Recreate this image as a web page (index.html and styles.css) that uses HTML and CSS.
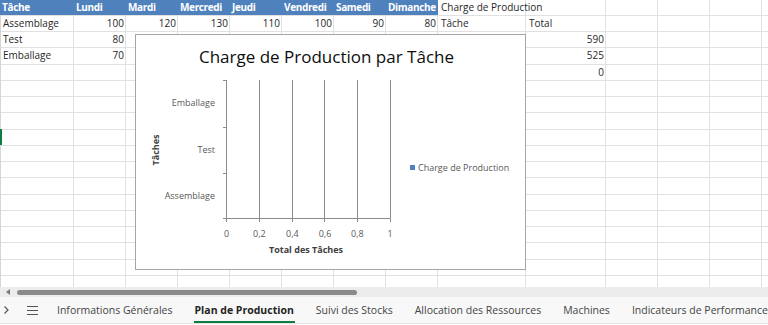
FILE: index.html
```html
<!DOCTYPE html>
<html lang="fr">

<head>
  <meta charset="UTF-8">
  <title>Plan de Production</title>
  <link rel="stylesheet" href="styles.css">
</head>

<body>
  <div class="app">
    <div class="sheet">
      <div class="row">
        <div class="cell head">Tâche</div>
        <div class="cell head">Lundi</div>
        <div class="cell head">Mardi</div>
        <div class="cell head">Mercredi</div>
        <div class="cell head">Jeudi</div>
        <div class="cell head">Vendredi</div>
        <div class="cell head">Samedi</div>
        <div class="cell head">Dimanche</div>
        <div class="cell">Charge de Production</div>
      </div>
      <div class="row">
        <div class="cell">Assemblage</div>
        <div class="cell num">100</div>
        <div class="cell num">120</div>
        <div class="cell num">130</div>
        <div class="cell num">110</div>
        <div class="cell num">100</div>
        <div class="cell num">90</div>
        <div class="cell num">80</div>
        <div class="cell">Tâche</div>
        <div class="cell">Total</div>
      </div>
      <div class="row">
        <div class="cell">Test</div>
        <div class="cell num">80</div>
        <div class="cell num col-j">590</div>
      </div>
      <div class="row tall">
        <div class="cell">Emballage</div>
        <div class="cell num">70</div>
        <div class="cell num col-j">525</div>
      </div>
      <div class="row">
        <div class="cell num col-j">0</div>
      </div>

      <!-- ligne active -->
      <i class="row-mark"></i>

      <!-- graphique posé sur la feuille -->
      <div class="chart">
        <svg width="389" height="234" viewBox="0 0 389 234">
          <text class="chart-title" x="190.5" y="27.5" text-anchor="middle">Charge de Production par Tâche</text>
          <path class="grid" d="M123.5 45V183 M156.5 45V183 M188.5 45V183 M221.5 45V183 M254.5 45V183" />
          <path class="axis" d="M90.5 45V183.5 M90.5 183.5H254.5 M87 45.5H90.5 M87 92.5H90.5 M87 138.5H90.5 M87 183.5H90.5 M90.5 183.5V187 M123.5 183.5V187 M156.5 183.5V187 M188.5 183.5V187 M221.5 183.5V187 M254.5 183.5V187" />
          <text class="label" x="79" y="71" text-anchor="end">Emballage</text>
          <text class="label" x="79" y="117.5" text-anchor="end">Test</text>
          <text class="label" x="79" y="164" text-anchor="end">Assemblage</text>
          <text class="label" x="90.7" y="201.5" text-anchor="middle">0</text>
          <text class="label" x="123.3" y="201.5" text-anchor="middle">0,2</text>
          <text class="label" x="156.3" y="201.5" text-anchor="middle">0,4</text>
          <text class="label" x="189" y="201.5" text-anchor="middle">0,6</text>
          <text class="label" x="221.3" y="201.5" text-anchor="middle">0,8</text>
          <text class="label" x="254" y="201.5" text-anchor="middle">1</text>
          <text class="axis-title" x="170" y="217.5" text-anchor="middle">Total des Tâches</text>
          <text class="axis-title" transform="translate(22.5 115) rotate(-90)" text-anchor="middle">Tâches</text>
          <rect class="swatch" x="274" y="130" width="5" height="5" />
          <text class="label" x="282" y="135.5">Charge de Production</text>
        </svg>
      </div>
    </div>

    <div class="hscroll">
      <i class="arrow"></i>
      <div class="thumb"></div>
    </div>

    <div class="tabs">
      <svg class="chev" width="7" height="10" viewBox="0 0 7 10">
        <path d="M1.5 1.5L5 5L1.5 8.5" />
      </svg>
      <svg class="menu" width="11" height="9" viewBox="0 0 11 9">
        <path d="M0 0.5H11 M0 4.5H11 M0 8.5H11" />
      </svg>
      <span class="tab">Informations Générales</span>
      <span class="tab active">Plan de Production</span>
      <span class="tab">Suivi des Stocks</span>
      <span class="tab">Allocation des Ressources</span>
      <span class="tab">Machines</span>
      <span class="tab">Indicateurs de Performance</span>
    </div>
  </div>
</body>

</html>
```

FILE: styles.css
```css
* {
  margin: 0;
  padding: 0;
  box-sizing: border-box;
}

body {
  width: 768px;
  height: 325px;
  overflow: hidden;
  background: #fff;
  font-family: "Open Sans", "Noto Sans", sans-serif;
}

.app {
  display: flex;
  flex-direction: column;
  height: 325px;
}

/* feuille de calcul */
.sheet {
  position: relative;
  height: 287px;
  flex-shrink: 0;
  overflow: hidden;
  background-image:
    linear-gradient(to right,
      #d6d6d6 0 1px, transparent 1px 73px,
      #e1e1e1 73px 74px, transparent 74px 125px,
      #e1e1e1 125px 126px, transparent 126px 177px,
      #e1e1e1 177px 178px, transparent 178px 229px,
      #e1e1e1 229px 230px, transparent 230px 281px,
      #e1e1e1 281px 282px, transparent 282px 333px,
      #e1e1e1 333px 334px, transparent 334px 385px,
      #e1e1e1 385px 386px, transparent 386px 437px,
      #e1e1e1 437px 438px, transparent 438px 525px,
      #e1e1e1 525px 526px, transparent 526px 605px,
      #e1e1e1 605px 606px, transparent 606px 657px,
      #e1e1e1 657px 658px, transparent 658px 709px,
      #e1e1e1 709px 710px, transparent 710px 761px,
      #e1e1e1 761px 762px, transparent 762px),
    repeating-linear-gradient(to bottom,
      transparent 0 15px, #e1e1e1 15px 16px,
      transparent 16px 31px, #e1e1e1 31px 32px,
      transparent 32px 47px, #e1e1e1 47px 48px,
      transparent 48px 64px, #e1e1e1 64px 65px);
}

.row {
  display: grid;
  grid-template-columns: 74px repeat(7, 52px) 88px 80px repeat(4, 52px) 1fr;
  height: 16px;
}

.row.tall {
  height: 17px;
}

.cell {
  height: 15px;
  padding: 0 2px 0 3px;
  font-size: 10px;
  line-height: 15px;
  color: #1f1f1f;
  white-space: nowrap;
}

.cell.head {
  padding-left: 2px;
  background: #4f81bd;
  color: #fff;
  font-weight: 700;
  letter-spacing: -0.35px;
  overflow: hidden;
}

.cell.num {
  text-align: right;
}

.col-j {
  grid-column: 10;
}

.row-mark {
  position: absolute;
  left: 0;
  top: 129px;
  width: 2px;
  height: 16px;
  background: #107c41;
}

/* graphique */
.chart {
  position: absolute;
  left: 135px;
  top: 34px;
  width: 391px;
  height: 236px;
  border: 1px solid #a6a6a6;
  background: #fff;
}

.chart svg {
  display: block;
}

.chart-title {
  font-size: 17px;
  font-weight: 500;
  fill: #0d0d0d;
}

.chart .grid {
  stroke: #8c8c8c;
  stroke-width: 1;
  fill: none;
}

.chart .axis {
  stroke: #8c8c8c;
  stroke-width: 1;
  fill: none;
}

.chart .label {
  font-size: 9px;
  fill: #595959;
}

.chart .axis-title {
  font-size: 9px;
  font-weight: 700;
  fill: #404040;
}

.chart .swatch {
  fill: #4f81bd;
}

/* barre de défilement */
.hscroll {
  display: flex;
  align-items: center;
  gap: 7px;
  height: 10px;
  flex-shrink: 0;
  padding-left: 6px;
  background: #ececec;
}

.hscroll .arrow {
  width: 0;
  height: 0;
  border-top: 3px solid transparent;
  border-bottom: 3px solid transparent;
  border-right: 4px solid #7a7a7a;
}

.hscroll .thumb {
  width: 340px;
  height: 5px;
  border-radius: 3px;
  background: #8a8a8a;
}

/* onglets */
.tabs {
  display: flex;
  align-items: center;
  height: 27px;
  flex-shrink: 0;
  padding-left: 3px;
  overflow: hidden;
  background: #f8f8f8;
  border-bottom: 1px solid #e3e3e3;
  font-size: 10.5px;
  color: #444;
  white-space: nowrap;
}

.tabs svg {
  flex-shrink: 0;
  fill: none;
}

.tabs .chev {
  margin-right: 17px;
  stroke: #555;
  stroke-width: 1.2;
}

.tabs .menu {
  margin-right: 8px;
  stroke: #555;
  stroke-width: 1;
}

.tab {
  position: relative;
  flex-shrink: 0;
  height: 27px;
  padding: 0 11px;
  line-height: 26px;
}

.tab.active {
  font-weight: 700;
  color: #242424;
}

.tab.active::after {
  content: "";
  position: absolute;
  left: 10px;
  right: 10px;
  bottom: 0;
  height: 3px;
  background: #107c41;
}
```
